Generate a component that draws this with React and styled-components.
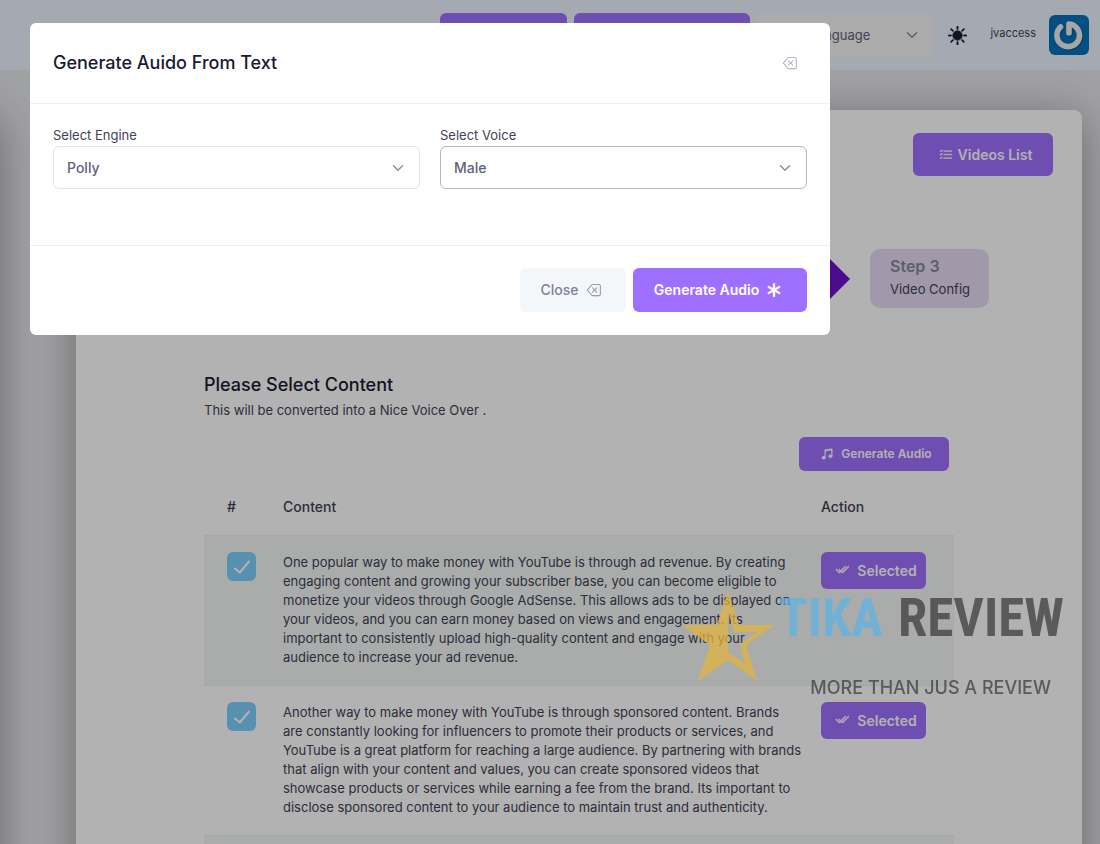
import React from "react";
import styled, { createGlobalStyle } from "styled-components";
import {
  BsAsterisk,
  BsBackspace,
  BsCheck2All,
  BsChevronDown,
  BsListCheck,
  BsMusicNoteBeamed,
  BsSunFill,
} from "react-icons/bs";

const GlobalStyle = createGlobalStyle`
  *, *::before, *::after { box-sizing: border-box; }
  body {
    margin: 0;
    background: #e6e7ea;
    color: #3f4254;
    font: 400 13px/20px Inter, "Liberation Sans", sans-serif;
  }
  button, select, input { font: inherit; color: inherit; margin: 0; }
  h1, h2, p { margin: 0; }
`;

const Page = styled.div`
  height: 100vh;
  overflow: hidden;
`;

const TopBar = styled.header`
  height: 70px;
  padding-right: 11px;
  display: flex;
  align-items: center;
  justify-content: flex-end;
  background: #ecf4ff;
`;

const Button = styled.button`
  display: inline-flex;
  align-items: center;
  justify-content: center;
  gap: ${(p) => p.$gap || 8}px;
  height: ${(p) => p.$height || 43}px;
  width: ${(p) => (p.$width ? `${p.$width}px` : "auto")};
  padding: ${(p) => (p.$trailing ? "0 5px 0 0" : "0 0 0 5px")};
  border: 0;
  border-radius: 6px;
  background: ${(p) => (p.$light ? "#f3f7fa" : "#9f70ff")};
  color: ${(p) => (p.$light ? "#7e8299" : "#ffffff")};
  font-size: ${(p) => p.$size || 14}px;
  font-weight: ${(p) => (p.$light ? 500 : 600)};
  white-space: nowrap;
  cursor: pointer;

  > svg { flex: none; }
`;

const TopActions = styled.div`
  display: flex;
  align-self: flex-start;
  gap: 7px;
  padding: 13px 6px 0 0;
`;

const SelectShell = styled.div`
  display: grid;
  align-items: center;
  width: ${(p) => (p.$width ? `${p.$width}px` : "100%")};

  > * { grid-area: 1 / 1; }
  > svg {
    justify-self: end;
    margin-right: 16px;
    color: #7e8299;
    pointer-events: none;
  }
`;

const SelectBox = styled.select`
  appearance: none;
  width: 100%;
  height: 43px;
  padding: 0 ${(p) => p.$inset || 13}px;
  border: 1px solid ${(p) => p.$border || "#e1e3ee"};
  border-radius: 6px;
  background: ${(p) => p.$fill || "#ffffff"};
  color: #5e6278;
  font-size: ${(p) => p.$size || 14}px;
  font-weight: ${(p) => p.$weight || 500};
  outline: none;
`;

const ThemeButton = styled.button`
  display: flex;
  margin-left: 14px;
  padding: 0;
  border: 0;
  background: none;
  color: #181c32;
`;

const UserName = styled.span`
  margin: 0 13px 4px 23px;
  font-size: 11px;
`;

const Avatar = styled.svg`
  width: 40px;
  height: 40px;
  border-radius: 6px;
  background: #0772bb;
`;

const Sidebar = styled.aside`
  position: fixed;
  top: 110px;
  bottom: -40px;
  right: 100%;
  width: 220px;
  border-radius: 8px;
  background: #ffffff;
  box-shadow: 0 8px 45px rgba(0, 0, 0, 0.35);
`;

const Card = styled.main`
  margin: 40px 18px 0 76px;
  padding: 23px 29px 60px;
  border-radius: 8px;
  background: #ffffff;
  box-shadow: 0 8px 45px rgba(0, 0, 0, 0.35);
`;

const CardTools = styled.div`
  display: flex;
  justify-content: flex-end;
`;

const Steps = styled.div`
  display: flex;
  align-items: center;
  justify-content: flex-end;
  gap: 20px;
  margin: 73px 64px 66px 0;
`;

const Step = styled.div`
  width: 119px;
  height: 59px;
  padding: 7px 0 0 20px;
  border-radius: 10px;
  background: #e7dbf4;
  white-space: nowrap;
`;

const StepName = styled.div`
  margin-bottom: 3px;
  color: #858899;
  font-size: 16px;
  font-weight: 600;
`;

const Content = styled.section`
  max-width: 750px;
  margin: 0 99px;
`;

const ContentTitle = styled.h2`
  color: #181c32;
  font-size: 18px;
  font-weight: 500;
  line-height: 22px;
  margin-bottom: 4px;
`;

const ContentTools = styled.div`
  display: flex;
  justify-content: flex-end;
  padding: 17px 5px 8px 0;
`;

const Table = styled.table`
  width: 100%;
  border-collapse: collapse;
  table-layout: fixed;

  th {
    height: 56px;
    padding: 0;
    text-align: left;
    font-size: 14px;
    font-weight: 500;
  }
  th:nth-child(1) { width: 79px; }
  th:nth-child(3) { width: 133px; }
  td {
    padding: 16px 0 14px;
    vertical-align: top;
    line-height: 19px;
  }
  th:nth-child(1), td:nth-child(1) { padding-left: 23px; }
  td:nth-child(2) { padding: 17px 20px 18px 0; }
  tbody tr { border-top: 1px solid #ebeef0; }
  tbody tr:nth-child(odd) { background: #f4f7f7; }
`;

const Tick = styled.label`
  display: grid;
  width: 29px;
  height: 29px;
  > * { grid-area: 1 / 1; }
`;

const TickInput = styled.input`
  appearance: none;
  width: 29px;
  height: 29px;
  border-radius: 6px;
  background: #7fcefd;
`;

const TickMark = styled.svg`
  width: 29px;
  height: 29px;
  pointer-events: none;
`;

const Backdrop = styled.div`
  position: fixed;
  inset: 0;
  padding: 23px 30px;
  background: rgba(0, 0, 0, 0.3);
`;

const Dialog = styled.div`
  max-width: 800px;
  border-radius: 6px;
  background: #ffffff;
`;

const DialogHead = styled.div`
  display: flex;
  align-items: center;
  justify-content: space-between;
  height: 81px;
  padding: 0 33px 0 23px;
  border-bottom: 1px solid #eff0f2;
`;

const DialogTitle = styled.h1`
  color: #181c32;
  font-size: 18px;
  font-weight: 500;
`;

const IconButton = styled.button`
  display: flex;
  padding: 0;
  border: 0;
  background: none;
  color: #a1a5b7;
`;

const DialogBody = styled.div`
  display: grid;
  grid-template-columns: 1fr 1fr;
  gap: 20px;
  padding: 21px 23px 56px;
`;

const Field = styled.div`
  label { display: block; margin-bottom: 1px; }
`;

const DialogFoot = styled.div`
  display: flex;
  justify-content: flex-end;
  gap: 7px;
  padding: 22px 23px 23px;
  border-top: 1px solid #eff0f2;
`;

const Watermark = styled.div`
  position: fixed;
  top: 584px;
  right: 36px;
  width: 382px;
  display: flex;
  align-items: flex-start;
  justify-content: space-between;
  opacity: 0.75;
  pointer-events: none;
`;

const Brand = styled.div`
  display: flex;
  justify-content: flex-end;
  gap: 15px;
  color: #3c3c3c;
  font: 700 53px/68px "Roboto Condensed", "Open Sans Condensed", "Noto Sans Condensed", "Liberation Sans Narrow", "Liberation Sans", sans-serif;
  > span:first-child { color: #5fb3e4; }
`;

const Slogan = styled.div`
  padding: 26px 13px 0 0;
  color: #3c3c3c;
  font-size: 18px;
  font-weight: 500;
  text-align: right;
`;

const Star = styled.svg`
  width: 92px;
  height: 90px;
  margin-top: 7px;
`;

const rows = [
  "One popular way to make money with YouTube is through ad revenue. By creating engaging content and growing your subscriber base, you can become eligible to monetize your videos through Google AdSense. This allows ads to be displayed on your videos, and you can earn money based on views and engagement. Its important to consistently upload high-quality content and engage with your audience to increase your ad revenue.",
  "Another way to make money with YouTube is through sponsored content. Brands are constantly looking for influencers to promote their products or services, and YouTube is a great platform for reaching a large audience. By partnering with brands that align with your content and values, you can create sponsored videos that showcase products or services while earning a fee from the brand. Its important to disclose sponsored content to your audience to maintain trust and authenticity.",
];

function Dropdown({ id, label, value, width, ...look }) {
  return (
    <SelectShell $width={width}>
      <SelectBox id={id} aria-label={label} {...look}>
        <option>{value}</option>
      </SelectBox>
      <BsChevronDown size={12} stroke="currentColor" strokeWidth={1} />
    </SelectShell>
  );
}

export default function App() {
  return (
    <Page>
      <GlobalStyle />
      <TopBar>
        <TopActions>
          <Button $width={127} aria-label="Create" />
          <Button $width={176} aria-label="Upgrade" />
        </TopActions>
        <Dropdown
          label="Language"
          value="Select Language"
          width={178}
          $fill="#f5f5f5"
          $border="#f5f5f5"
          $size={13}
          $weight={400}
          $inset={10}
        />
        <ThemeButton aria-label="Theme">
          <BsSunFill size={19} stroke="currentColor" strokeWidth={0.6} />
        </ThemeButton>
        <UserName>jvaccess</UserName>
        <Avatar viewBox="0 0 40 40" aria-hidden="true">
          <g fill="none" stroke="#075a93" strokeWidth="6" strokeLinecap="round" transform="translate(1 1)">
            <path d="M20 18V9A11.300 11.300 0 1 1 11.500 12" />
          </g>
          <g fill="none" stroke="#eeeeec" strokeWidth="5.6" strokeLinecap="round" strokeLinejoin="round">
            <path d="M20 18V9A11.300 11.300 0 1 1 11.500 12" />
          </g>
        </Avatar>
      </TopBar>

      <Sidebar />

      <Card>
        <CardTools>
          <Button $width={140} $gap={5}>
            <BsListCheck size={14} stroke="currentColor" strokeWidth={0.5} />
            Videos List
          </Button>
        </CardTools>
        <Steps>
          <svg width="20" height="40" viewBox="0 0 20 40" aria-hidden="true">
            <path d="M0 0L20 20L0 40Z" fill="#6a11cb" />
          </svg>
          <Step>
            <StepName>Step 3</StepName>
            Video Config
          </Step>
        </Steps>
        <Content>
          <ContentTitle>Please Select Content</ContentTitle>
          <p>This will be converted into a Nice Voice Over .</p>
          <ContentTools>
            <Button $width={150} $height={34} $size={12}>
              <BsMusicNoteBeamed size={12} stroke="currentColor" strokeWidth={0.5} />
              Generate Audio
            </Button>
          </ContentTools>
          <Table>
            <thead>
              <tr>
                <th>#</th>
                <th>Content</th>
                <th>Action</th>
              </tr>
            </thead>
            <tbody>
              {rows.map((text) => (
                <tr key={text}>
                  <td>
                    <Tick>
                      <TickInput type="checkbox" defaultChecked aria-label="Select content" />
                      <TickMark viewBox="0 0 29 29" aria-hidden="true">
                        <path
                          d="M8 16.5L12.8 20.5L22 9.5"
                          fill="none"
                          stroke="#ffffff"
                          strokeWidth="2"
                          strokeLinecap="round"
                          strokeLinejoin="round"
                        />
                      </TickMark>
                    </Tick>
                  </td>
                  <td>{text}</td>
                  <td>
                    <Button $width={105} $height={37}>
                      <BsCheck2All size={14} stroke="currentColor" strokeWidth={0.9} />
                      Selected
                    </Button>
                  </td>
                </tr>
              ))}
              <tr>
                <td />
                <td />
                <td />
              </tr>
            </tbody>
          </Table>
        </Content>
      </Card>

      <Backdrop>
        <Dialog role="dialog" aria-labelledby="dialog-title">
          <DialogHead>
            <DialogTitle id="dialog-title">Generate Auido From Text</DialogTitle>
            <IconButton aria-label="Dismiss">
              <BsBackspace size={14} />
            </IconButton>
          </DialogHead>
          <DialogBody>
            <Field>
              <label htmlFor="engine">Select Engine</label>
              <Dropdown id="engine" value="Polly" />
            </Field>
            <Field>
              <label htmlFor="voice">Select Voice</label>
              <Dropdown id="voice" value="Male" $border="#b5b5c3" />
            </Field>
          </DialogBody>
          <DialogFoot>
            <Button $light $trailing $width={106} $height={44}>
              Close
              <BsBackspace size={14} />
            </Button>
            <Button $trailing $width={174} $height={44}>
              Generate Audio
              <BsAsterisk size={14} stroke="currentColor" strokeWidth={0.6} />
            </Button>
          </DialogFoot>
        </Dialog>
      </Backdrop>

      <Watermark>
        <Star viewBox="0 0 92 90" aria-hidden="true">
          <path
            fill="#e1b540"
            fillRule="evenodd"
            d="M46 0L57 34H92L64 54L75 90L46 69L16 90L28 54L0 34H35ZM46 20V61L63 73L58 53L75 41H52Z"
          />
        </Star>
        <div>
          <Brand>
            <span>TIKA</span>
            <span>REVIEW</span>
          </Brand>
          <Slogan>MORE THAN JUS A REVIEW</Slogan>
        </div>
      </Watermark>
    </Page>
  );
}
